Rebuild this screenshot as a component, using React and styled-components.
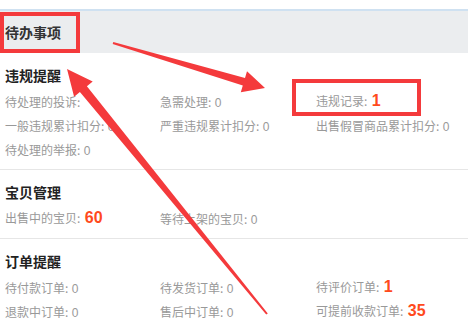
import React from 'react';
import styled, { createGlobalStyle } from 'styled-components';

const GlobalStyle = createGlobalStyle`
  body {
    margin: 0;
    background: #ffffff;
    font-family: "Noto Sans CJK SC", "Liberation Sans", sans-serif;
  }
`;

const sections = [
  {
    title: '违规提醒',
    rows: [
      [{ label: '待处理的投诉:' }, { label: '急需处理:', value: '0' }, { label: '违规记录:', value: '1', hot: true, marked: true }],
      [{ label: '一般违规累计扣分:', value: '0' }, { label: '严重违规累计扣分:', value: '0' }, { label: '出售假冒商品累计扣分:', value: '0' }],
      [{ label: '待处理的举报:', value: '0' }],
    ],
  },
  {
    title: '宝贝管理',
    rows: [
      [{ label: '出售中的宝贝:', value: '60', hot: true }, { label: '等待上架的宝贝:', value: '0' }],
    ],
  },
  {
    title: '订单提醒',
    rows: [
      [{ label: '待付款订单:', value: '0' }, { label: '待发货订单:', value: '0' }, { label: '待评价订单:', value: '1', hot: true }],
      [{ label: '退款中订单:', value: '0' }, { label: '售后中订单:', value: '0' }, { label: '可提前收款订单:', value: '35', hot: true }],
    ],
  },
];

const App = () => {
  return (
    <>
      <GlobalStyle />
      <Page>
        <Header>
          <HeaderTitle>待办事项</HeaderTitle>
        </Header>
        {sections.map((section, i) => (
          <Section key={i} last={i === sections.length - 1}>
            <SectionTitle>{section.title}</SectionTitle>
            {section.rows.map((row, r) => (
              <Row key={r}>
                {row.map((item, c) => (
                  <Item key={c}>
                    {item.label}
                    {item.value ? <Value hot={item.hot}>{' '}{item.value}</Value> : null}
                    {item.marked ? <Mark /> : null}
                  </Item>
                ))}
              </Row>
            ))}
          </Section>
        ))}
        <Arrows width="468" height="320" viewBox="0 0 468 320">
          <polygon
            fill="#f43a3c"
            points="112.7,44 242.8,85.6 240.8,92.3 265,88 247,71.2 245,77.9 113.3,42"
          />
          <polygon
            fill="#f43a3c"
            points="267.8,313.4 86.9,86.3 92.7,81.5 67,69 74.1,96.7 79.9,91.9 266.2,314.6"
          />
        </Arrows>
      </Page>
    </>
  );
};

export default App;

const Page = styled.div`
  position: relative;
  width: 468px;
  height: 320px;
  overflow: hidden;
  padding-top: 9px;
  box-sizing: border-box;
`;

const Header = styled.div`
  display: flex;
  align-items: center;
  height: 42px;
  border-top: 2px solid #cfe1f1;
  background: #ebedef;
`;

const HeaderTitle = styled.div`
  display: flex;
  align-items: center;
  box-sizing: border-box;
  height: 41px;
  width: 80px;
  padding-left: 1px;
  border: 4px solid #f43a3c;
  font-size: 14px;
  font-weight: bold;
  color: #333333;
`;

const Section = styled.div`
  padding: 12px 0 8px 5px;
  border-bottom: ${props => props.last ? 'none' : '1px solid #e6e6e6'};
`;

const SectionTitle = styled.div`
  height: 20px;
  line-height: 20px;
  margin-bottom: 4px;
  font-size: 14px;
  font-weight: bold;
  color: #222222;
`;

const Row = styled.div`
  display: grid;
  grid-template-columns: 155px 156px 1fr;
  height: 24px;
  align-items: center;
`;

const Item = styled.div`
  position: relative;
  font-size: 12px;
  color: #999999;
  white-space: nowrap;
`;

const Value = styled.span`
  font-family: "Liberation Sans", "Noto Sans CJK SC", sans-serif;
  font-size: ${props => props.hot ? '16px' : '12px'};
  font-weight: ${props => props.hot ? 'bold' : 'normal'};
  color: ${props => props.hot ? '#ff4a1c' : '#999999'};
`;

const Mark = styled.span`
  position: absolute;
  left: -24px;
  top: -13px;
  width: 129px;
  height: 37px;
  box-sizing: border-box;
  border: 4px solid #f43a3c;
`;

const Arrows = styled.svg`
  position: absolute;
  left: 0;
  top: 0;
  pointer-events: none;
`;
